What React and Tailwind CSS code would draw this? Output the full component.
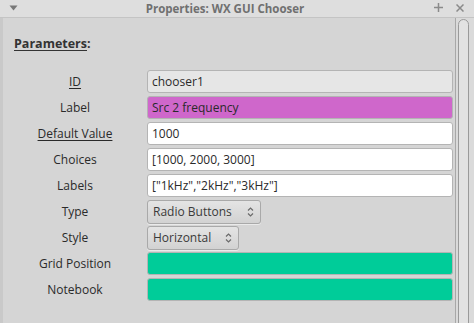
import React from "react";

const font = { fontFamily: '"Open Sans", "Noto Sans", sans-serif' };

function Field({ value, bg = "bg-white", width = "w-[306px]" }) {
  return (
    <div
      className={`h-[23px] ${width} ${bg} border border-[#b4b4b4] rounded-[3px] flex items-center px-[4px] text-[12px] text-[#2a2a2a] overflow-hidden whitespace-nowrap`}
    >
      {value}
    </div>
  );
}

function Combo({ value, width }) {
  return (
    <div
      className={`h-[24px] ${width} bg-gradient-to-b from-[#e4e4e4] to-[#d2d2d2] border border-[#a9a9a9] rounded-[3px] flex items-center justify-between pl-[5px] pr-[6px] text-[12px] text-[#3a3a3a] shadow-[0_1px_0_rgba(255,255,255,0.5)]`}
    >
      <span>{value}</span>
      <svg width="7" height="12" viewBox="0 0 7 12">
        <path d="M1 4.5 L3.5 2 L6 4.5" fill="none" stroke="#6a6a6a" strokeWidth="1.2" />
        <path d="M1 7.5 L3.5 10 L6 7.5" fill="none" stroke="#6a6a6a" strokeWidth="1.2" />
      </svg>
    </div>
  );
}

function Label({ label, underline }) {
  return (
    <div className="w-[144px] text-center text-[12px] text-[#2a2a2a]">
      <span className={underline ? "underline underline-offset-2" : ""}>{label}</span>
    </div>
  );
}

function Line({ label, underline, children }) {
  return (
    <div className="flex items-center h-[23px]">
      <Label label={label} underline={underline} />
      {children}
    </div>
  );
}

export default function App() {
  return (
    <div className="w-[474px] h-[323px] bg-[#d5d5d5] overflow-hidden flex flex-col" style={font}>
      <div className="h-[18px] bg-[#dedede] border-b border-[#c4c4c4] flex items-center relative">
        <svg className="absolute left-[9px] top-[5px]" width="9" height="6" viewBox="0 0 9 6">
          <path d="M0.5 0.5 L8.5 0.5 L4.5 5.5 Z" fill="#777" />
        </svg>
        <div className="w-full text-center text-[11.5px] font-bold text-[#707070] leading-none pr-[24px]">
          Properties: WX GUI Chooser
        </div>
        <svg className="absolute left-[434px] top-[3px]" width="9" height="9" viewBox="0 0 9 9">
          <path d="M4.5 0 L4.5 9 M0 4.5 L9 4.5" stroke="#8a8a8a" strokeWidth="1.5" />
        </svg>
        <svg className="absolute left-[456px] top-[4px]" width="8" height="8" viewBox="0 0 8 8">
          <path d="M0.5 0.5 L7.5 7.5 M7.5 0.5 L0.5 7.5" stroke="#8a8a8a" strokeWidth="1.5" />
        </svg>
      </div>
      <div className="flex flex-1 min-h-0">
        <div className="w-[3px] bg-[#c9c9c9]" />
        <div className="w-[452px] flex flex-col">
          <div className="pl-[11px] pt-[17px] h-[52px] text-[12.5px] font-bold text-[#333]">
            <span className="underline underline-offset-2">Parameters</span>:
          </div>
          <div className="flex flex-col gap-[3px]">
            <Line label="ID" underline>
              <Field value="chooser1" bg="bg-[#e6e6e6]" />
            </Line>
            <Line label="Label">
              <Field value="Src 2 frequency" bg="bg-[#cf67cb]" />
            </Line>
            <Line label="Default Value" underline>
              <Field value="1000" />
            </Line>
            <Line label="Choices">
              <Field value="[1000, 2000, 3000]" />
            </Line>
            <Line label="Labels">
              <Field value={'["1kHz","2kHz","3kHz"]'} />
            </Line>
            <Line label="Type">
              <Combo value="Radio Buttons" width="w-[114px]" />
            </Line>
            <Line label="Style">
              <Combo value="Horizontal" width="w-[92px]" />
            </Line>
            <Line label="Grid Position">
              <Field value="" bg="bg-[#00cc99]" />
            </Line>
            <Line label="Notebook">
              <Field value="" bg="bg-[#00cc99]" />
            </Line>
          </div>
        </div>
        <div className="w-[1px] bg-[#a8a8a8]" />
        <div className="flex-1 bg-[#dadada] pt-[1px] pl-[2px]">
          <div className="w-[11px] h-[400px] rounded-t-[6px] border border-[#9a9a9a] bg-[#e2e2e2]" />
        </div>
      </div>
    </div>
  );
}
